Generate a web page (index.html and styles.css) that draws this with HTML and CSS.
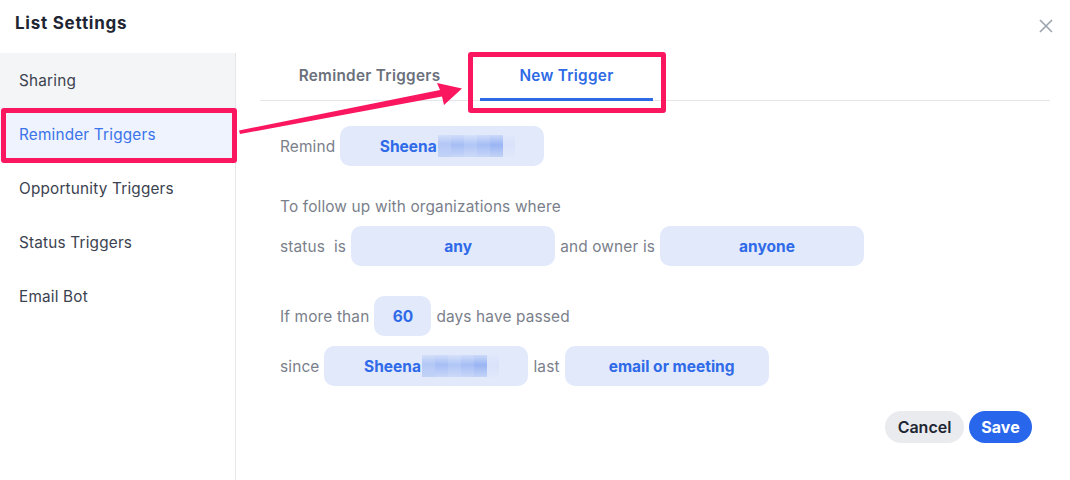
FILE: index.html
```html
<!DOCTYPE html>
<html>
<head>
<meta charset="utf-8">
<link rel="stylesheet" href="styles.css">
</head>
<body>
<div class="dialog">
  <div class="header">
    <div class="title">List Settings</div>
    <svg class="close" width="14" height="14" viewBox="0 0 14 14"><path d="M1 1L13 13M13 1L1 13" stroke="#9ca3af" stroke-width="1.6" fill="none"/></svg>
  </div>
  <div class="body">
    <div class="sidebar">
      <div class="nav-item hover">Sharing</div>
      <div class="nav-item active">Reminder Triggers</div>
      <div class="nav-item">Opportunity Triggers</div>
      <div class="nav-item">Status Triggers</div>
      <div class="nav-item">Email Bot</div>
    </div>
    <div class="main">
      <div class="tabs">
        <div class="tab">Reminder Triggers</div>
        <div class="tab selected">New Trigger</div>
      </div>
      <div class="row first">
        <span class="label">Remind</span>
        <span class="pill wide">Sheena<span class="blur"><i class="b1"></i><i class="b2"></i><i class="b3"></i><i class="b2"></i><i class="b4"></i><i class="b5"></i></span></span>
      </div>
      <div class="row text">
        <span class="label">To follow up with organizations where</span>
      </div>
      <div class="row">
        <span class="label">status&nbsp; is</span>
        <span class="pill wide">any</span>
        <span class="label">and owner is</span>
        <span class="pill wide">anyone</span>
      </div>
      <div class="row third">
        <span class="label">If more than</span>
        <span class="pill small">60</span>
        <span class="label">days have passed</span>
      </div>
      <div class="row fourth">
        <span class="label">since</span>
        <span class="pill wide">Sheena<span class="blur"><i class="b1"></i><i class="b2"></i><i class="b3"></i><i class="b2"></i><i class="b4"></i><i class="b5"></i></span></span>
        <span class="label">last</span>
        <span class="pill wide">email or meeting</span>
      </div>
      <div class="actions">
        <button class="btn cancel">Cancel</button>
        <button class="btn save">Save</button>
      </div>
    </div>
  </div>
  <div class="mark mark-nav"></div>
  <div class="mark mark-tab"></div>
  <svg class="arrow" width="1070" height="480" viewBox="0 0 1070 480">
    <polygon points="239,130.5 440,90 437,83 462,88.5 444,105 442,96.5 240,134" fill="#fb1660"/>
  </svg>
</div>
</body>
</html>
```
FILE: styles.css
```css
* { box-sizing: border-box; }
body {
  margin: 0;
  background: #fff;
  font-family: Inter, "Noto Sans", sans-serif;
}
.dialog {
  position: relative;
  width: 1070px;
  height: 480px;
  background: #fff;
  overflow: hidden;
}
.header {
  height: 53px;
  display: flex;
  align-items: center;
  justify-content: space-between;
  padding: 0 17px 8px 15px;
}
.title {
  font-size: 17px;
  font-weight: 700;
  color: #1f2633;
  letter-spacing: 0.75px;
}
.close { display: block; margin-top: 6px; }
.body {
  display: flex;
  height: 427px;
}
.sidebar {
  width: 236px;
  border-right: 1px solid #e5e7eb;
  flex-shrink: 0;
}
.nav-item {
  height: 54px;
  display: flex;
  align-items: center;
  padding-left: 19px;
  padding-top: 1px;
  font-size: 15.3px;
  letter-spacing: 0.2px;
  color: #3b4250;
}
.nav-item.hover { background: #f4f5f7; }
.nav-item.active { background: #eef3fd; color: #3b73ea; }
.main {
  flex: 1;
  margin: 0 20px 0 24px;
}
.tabs {
  display: flex;
  height: 48px;
  border-bottom: 1px solid #e5e7eb;
  padding-left: 23px;
  gap: 24px;
}
.tab {
  width: 173px;
  display: flex;
  justify-content: center;
  padding-top: 13px;
  font-size: 15.3px;
  letter-spacing: 0.3px;
  font-weight: 600;
  color: #6b717c;
}
.tab.selected {
  color: #2d6ae6;
  border-bottom: 3px solid #2d6ae6;
  height: 48px;
}
.row {
  display: flex;
  align-items: center;
  gap: 5px;
  height: 40px;
  padding-left: 20px;
}
.row.first { margin-top: 25px; }
.row.text { margin-top: 20px; }
.row.third { margin-top: 30px; }
.row.fourth { margin-top: 10px; }
.label {
  font-size: 15.4px;
  letter-spacing: 0.15px;
  color: #7a808b;
}
.pill {
  height: 40px;
  border-radius: 10px;
  background: #e1e9fb;
  color: #2f6ae8;
  font-size: 15.5px;
  letter-spacing: 0;
  font-weight: 700;
  display: flex;
  align-items: center;
  justify-content: center;
}
.pill.wide { width: 204px; padding-left: 10px; }
.pill.small { width: 57px; }
.blur {
  display: inline-flex;
  height: 22px;
  margin-left: 1px;
}
.blur i {
  display: block;
  width: 13px;
  height: 22px;
}
.blur .b1 { background: linear-gradient(#d3def9, #b4c8f6 40%, #c2d2f7); }
.blur .b2 { background: linear-gradient(#d0dcf9, #a6bef5 45%, #c8d6f8); }
.blur .b3 { background: linear-gradient(#d6e1fa, #b0c6f6 45%, #ccd9f8); }
.blur .b4 { background: linear-gradient(#cbd9f9, #9ab5f4 45%, #c3d3f7); }
.blur .b5 { background: linear-gradient(#e0e8fb, #d8e2fa 45%, #e0e8fb); width: 12px; }
.actions {
  display: flex;
  justify-content: flex-end;
  gap: 5px;
  margin-top: 25px;
  padding-right: 18px;
}
.btn {
  height: 32px;
  border: none;
  border-radius: 16px;
  padding: 0 12px;
  font-family: Inter, "Noto Sans", sans-serif;
  font-size: 16px;
  font-weight: 600;
}
.btn.cancel { background: #e9ebef; color: #1f2633; width: 79px; }
.btn.save { background: #2867ec; color: #fff; font-weight: 700; width: 63px; }
.mark {
  position: absolute;
  border: 5px solid #fb1660;
  border-radius: 3px;
}
.mark-nav { left: 1px; top: 108px; width: 236px; height: 55px; }
.mark-tab { left: 468px; top: 52px; width: 198px; height: 61px; }
.arrow { position: absolute; left: 0; top: 0; pointer-events: none; }
```
